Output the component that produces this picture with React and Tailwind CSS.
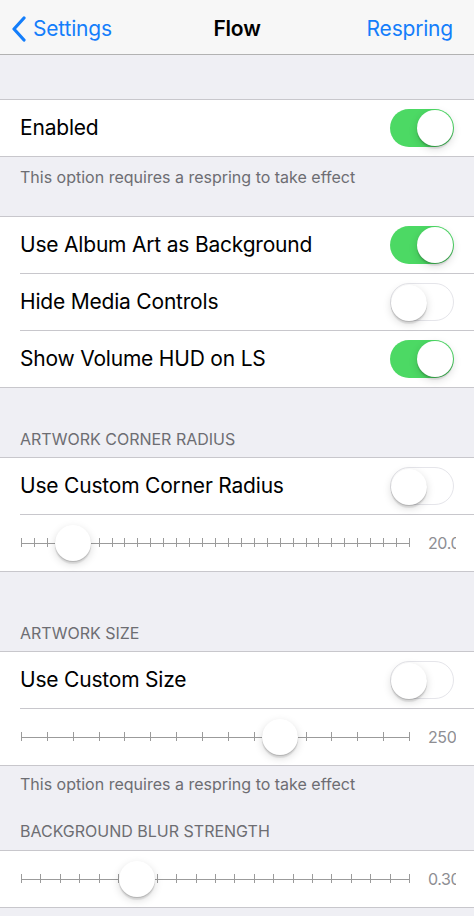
import React from "react";

const font = { fontFamily: "Inter, 'Noto Sans', sans-serif" };

function Switch({ on }) {
  return (
    <div
      className={
        "relative h-[38px] w-[64px] shrink-0 rounded-full " +
        (on ? "bg-[#4cd964]" : "bg-white border-[1.5px] border-[#e5e5ea]")
      }
    >
      <div
        className={
          "absolute top-[1px] h-[36px] w-[36px] rounded-full bg-white shadow-[0_3px_8px_rgba(0,0,0,0.15),0_1px_1px_rgba(0,0,0,0.16),0_3px_1px_rgba(0,0,0,0.08)] " +
          (on ? "right-[1px]" : "left-0 top-0")
        }
      />
    </div>
  );
}

function Slider({ ticks, pos, value }) {
  const marks = Array.from({ length: ticks + 1 }, (_, i) => i / ticks);
  return (
    <div className="flex h-[56px] items-center pl-[21px]">
      <div className="relative h-[36px] w-[389px] shrink-0">
        <div className="absolute left-0 right-0 top-[17.5px] h-px bg-[#9b9b9b]" />
        {marks.map((m, i) => (
          <div
            key={i}
            className="absolute top-[13px] h-[9px] w-px bg-[#9b9b9b]"
            style={{ left: `${m * 388}px` }}
          />
        ))}
        <div
          className="absolute top-0 h-[36px] w-[36px] -translate-x-1/2 rounded-full bg-white shadow-[0_3px_8px_rgba(0,0,0,0.15),0_1px_1px_rgba(0,0,0,0.16),0_3px_1px_rgba(0,0,0,0.08)]"
          style={{ left: `${pos}px` }}
        />
      </div>
      <div className="ml-[18px] w-[28px] overflow-hidden whitespace-nowrap text-[16px] tracking-[-0.4px] text-[#8e8e93]">
        {value}
      </div>
    </div>
  );
}

function Row({ label, on }) {
  return (
    <div className="flex h-[56px] items-center justify-between pl-5 pr-5">
      <span className="text-[21px] tracking-[-0.2px] text-black">{label}</span>
      <Switch on={on} />
    </div>
  );
}

function Sep() {
  return <div className="ml-5 h-px bg-[#c8c7cc]" />;
}

function Group({ children }) {
  return <div className="border-y border-[#c8c7cc] bg-white">{children}</div>;
}

function Header({ text, h }) {
  return (
    <div className={"flex items-end pb-2 pl-5 " + h}>
      <span className="text-[16px] leading-[20px] text-[#6d6d72]">{text}</span>
    </div>
  );
}

export default function App() {
  return (
    <div className="min-h-[916px] w-[474px] overflow-hidden bg-[#efeff4]" style={font}>
      {/* navigation bar */}
      <div className="relative flex h-[55px] items-center border-b border-[#b2b2b2] bg-[#f7f7f7] pt-[3px]">
        <div className="flex items-center pl-[11px] text-[#147efb]">
          <svg width="16" height="26" viewBox="0 0 16 26" className="mr-[6px]">
            <path d="M13 2 L3 13 L13 24" fill="none" stroke="#147efb" strokeWidth="3.2" strokeLinecap="round" strokeLinejoin="round" />
          </svg>
          <span className="text-[21px] tracking-[-0.2px]">Settings</span>
        </div>
        <div className="absolute left-1/2 -translate-x-1/2 text-[21px] font-semibold tracking-[-0.2px] text-black">
          Flow
        </div>
        <div className="ml-auto pr-[21px] text-[21px] tracking-[-0.2px] text-[#147efb]">Respring</div>
      </div>

      <div className="h-[44px]" />

      <Group>
        <Row label="Enabled" on />
      </Group>

      <div className="h-[59px] pl-5 pt-[8px]">
        <span className="text-[16px] leading-[20px] text-[#6d6d72]">This option requires a respring to take effect</span>
      </div>

      <Group>
        <Row label="Use Album Art as Background" on />
        <Sep />
        <Row label="Hide Media Controls" on={false} />
        <Sep />
        <Row label="Show Volume HUD on LS" on />
      </Group>

      <Header text="ARTWORK CORNER RADIUS" h="h-[69px]" />

      <Group>
        <Row label="Use Custom Corner Radius" on={false} />
        <Sep />
        <Slider ticks={30} pos={52} value="20.0" />
      </Group>

      <Header text="ARTWORK SIZE" h="h-[79px]" />

      <Group>
        <Row label="Use Custom Size" on={false} />
        <Sep />
        <Slider ticks={15} pos={259} value="250" />
      </Group>

      <div className="h-[84px] pl-5 pt-[8px]">
        <span className="block text-[16px] leading-[20px] text-[#6d6d72]">This option requires a respring to take effect</span>
        <span className="mt-[27px] block text-[16px] leading-[20px] text-[#6d6d72]">BACKGROUND BLUR STRENGTH</span>
      </div>

      <Group>
        <Slider ticks={20} pos={116} value="0.30" />
      </Group>
    </div>
  );
}
